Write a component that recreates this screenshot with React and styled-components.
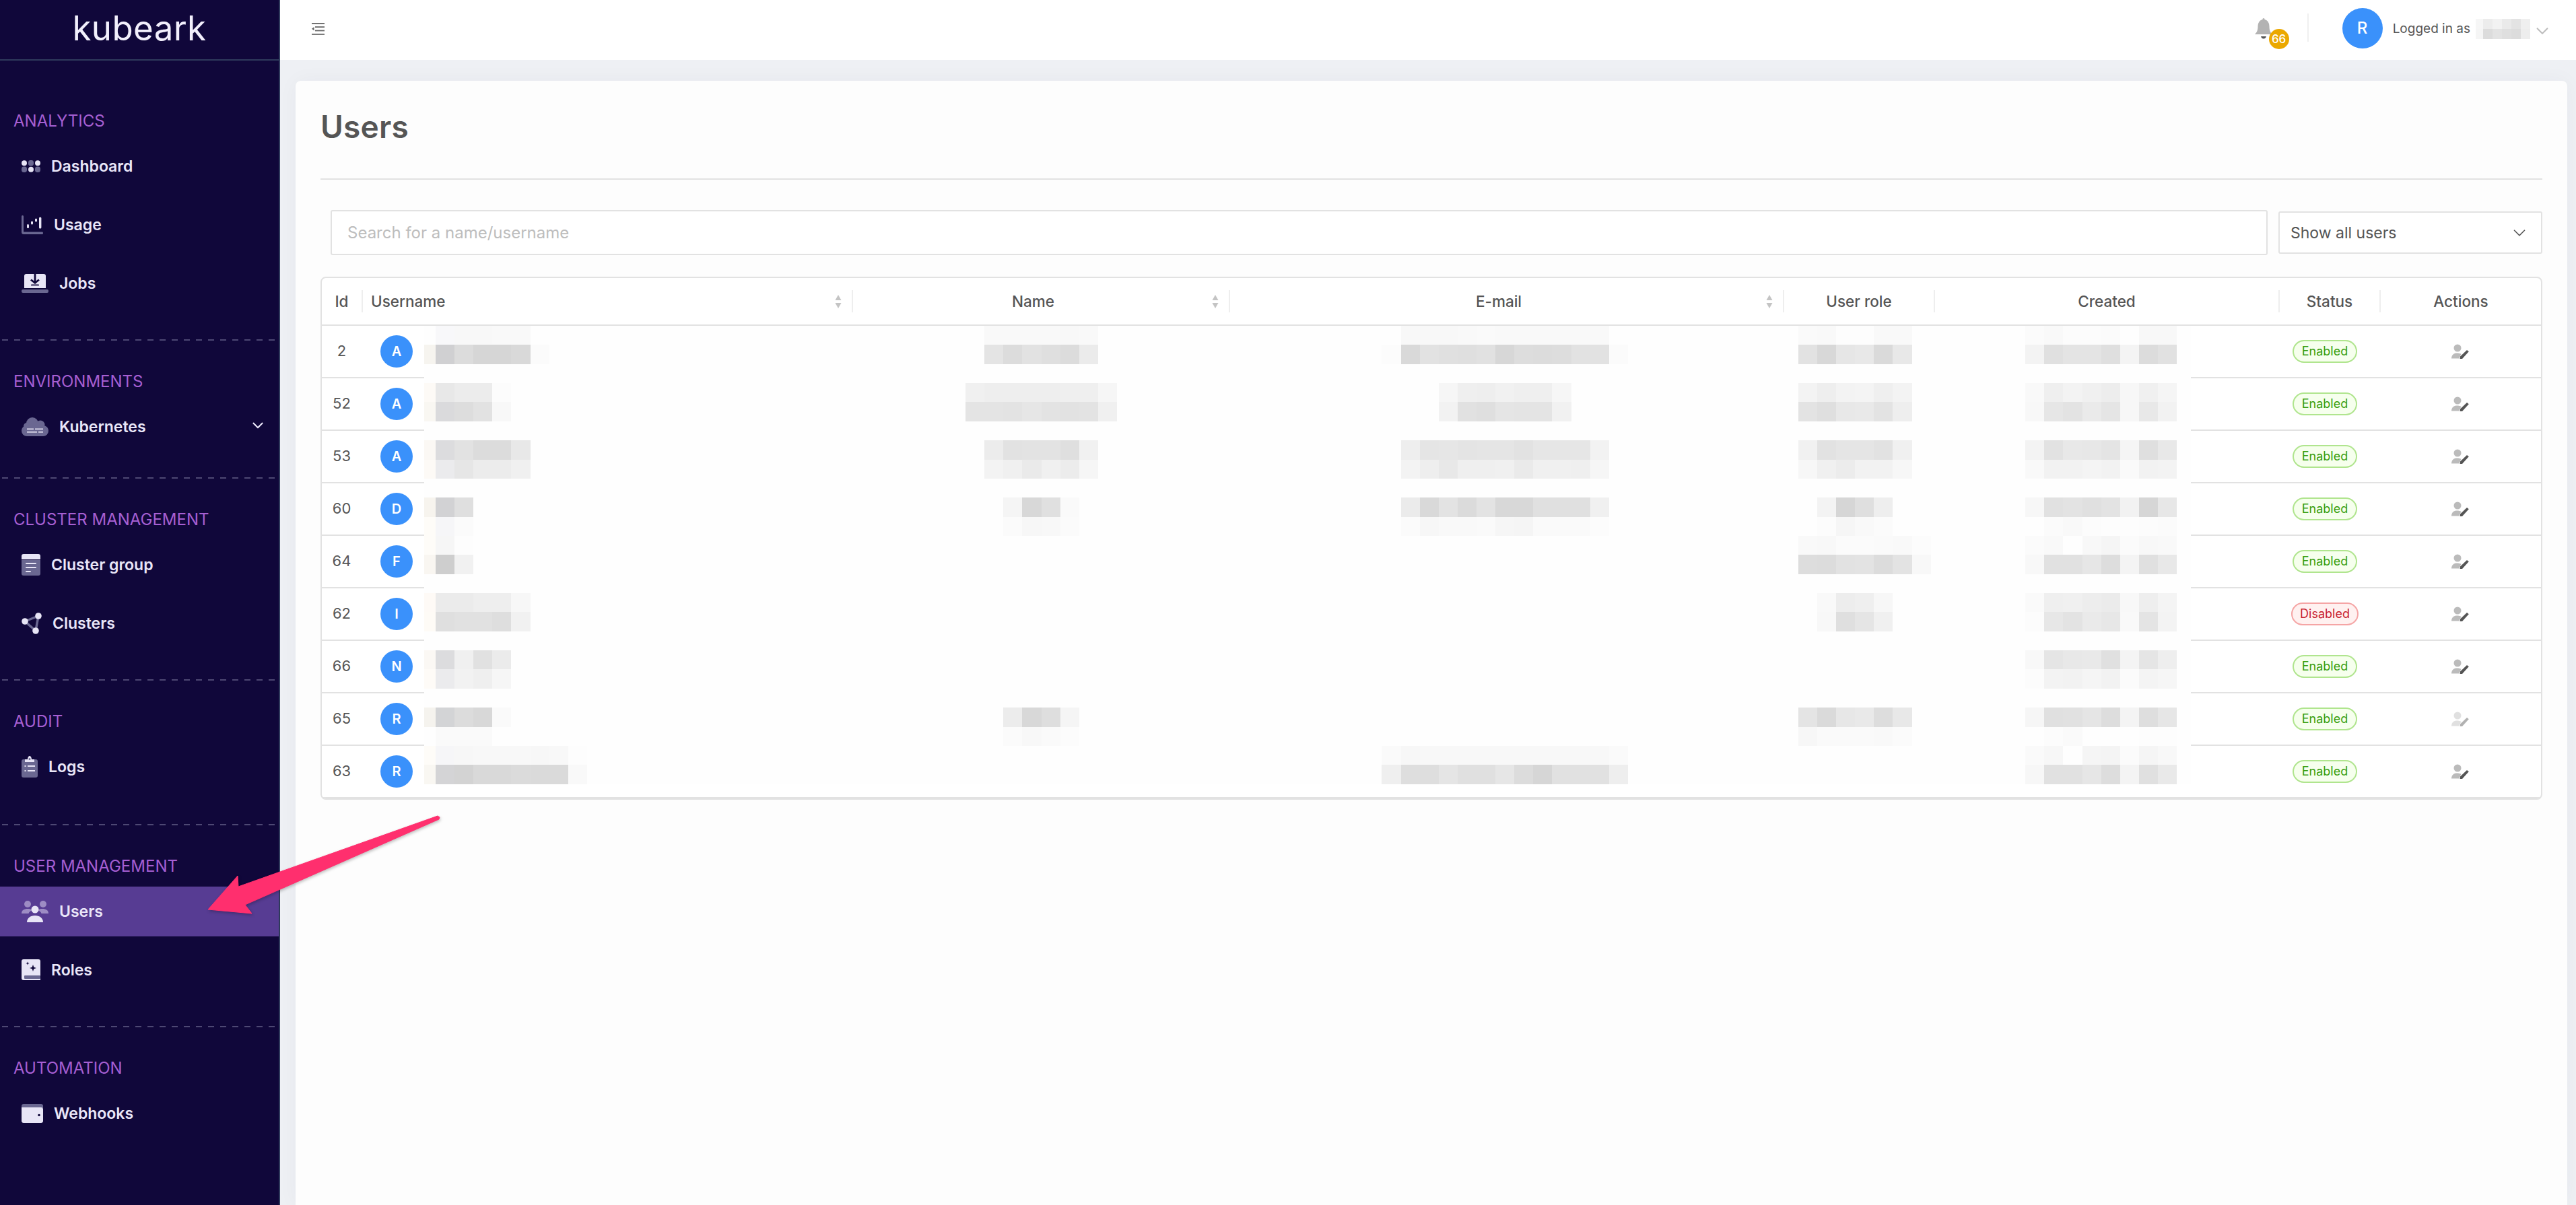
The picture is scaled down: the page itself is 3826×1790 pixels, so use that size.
import React from 'react';
import styled, { createGlobalStyle } from 'styled-components';
import { ChevronDown } from 'lucide-react';

const sans = '"Inter", "Liberation Sans", sans-serif';

const GlobalStyle = createGlobalStyle`
  html, body { margin: 0; padding: 0; background: #eef0f4; }
  body { font-family: ${sans}; overflow: hidden; }
  * { box-sizing: border-box; }
`;

const Root = styled.div`
  position: relative;
  display: flex;
  width: 3826px;
  height: 1790px;
  overflow: hidden;
`;

/* ---------- sidebar ---------- */

const Sidebar = styled.aside`
  flex: 0 0 416px;
  background: #10073a;
  border-right: 2px solid #2f3a5c;
`;

const Logo = styled.div`
  height: 90px;
  padding-bottom: 5px;
  border-bottom: 2px solid #2f3a5c;
  display: flex;
  align-items: center;
  justify-content: center;
  color: #f2effc;
  font-size: 51px;
  letter-spacing: 0.4px;
`;

const Section = styled.section`
  padding: ${p => p.$top}px 0 ${p => p.$bottom}px;
`;

const SectionLabel = styled.div`
  height: 36px;
  line-height: 36px;
  padding-left: 20px;
  margin-bottom: 12px;
  color: #a65fd3;
  font-size: 24px;
  white-space: nowrap;
`;

const ItemList = styled.div`
  display: flex;
  flex-direction: column;
  gap: 13px;
`;

const Item = styled.div`
  height: 74px;
  padding: 0 18px 0 32px;
  display: flex;
  align-items: center;
  gap: 16px;
  color: #e9e6f8;
  font-size: 23px;
  font-weight: 600;
  background: ${p => (p.$active ? '#573c93' : 'transparent')};
`;

const ItemCaret = styled(ChevronDown)`
  margin-left: auto;
  margin-top: -4px;
`;

const Divider = styled.div`
  height: 2px;
  margin: 0 3px;
  background: repeating-linear-gradient(90deg, #4d4873 0 9px, transparent 9px 18px);
`;

/* nav icons, duotone */
const LIGHT = '#e8e5f6';
const DIM = '#6a6791';
const DARK = '#10073a';

const DashboardIcon = () => (
  <svg width="28" height="18" viewBox="0 0 28 18">
    <circle cx="4" cy="4.3" r="4" fill={LIGHT} />
    <rect x="10" y="0" width="8" height="8.4" rx="3.4" fill={DIM} />
    <circle cx="24" cy="4.3" r="4" fill={LIGHT} />
    <rect x="0" y="9.6" width="8" height="8.4" rx="3.4" fill={DIM} />
    <circle cx="14" cy="13.8" r="4" fill={LIGHT} />
    <rect x="20" y="9.6" width="8" height="8.4" rx="3.4" fill={DIM} />
  </svg>
);

const UsageIcon = () => (
  <svg width="32" height="28" viewBox="0 0 32 28">
    <path d="M0 1.5C0 .6.6 0 1.5 0S3 .6 3 1.5V24.5H30.5c.9 0 1.5.7 1.5 1.7S31.4 28 30.5 28H3C1.2 28 0 26.8 0 25Z" fill={DIM} />
    <rect x="8" y="13" width="3" height="6" rx="1.5" fill={LIGHT} />
    <rect x="14" y="8.5" width="3" height="5" rx="1.5" fill={LIGHT} />
    <rect x="20" y="4.5" width="3" height="5" rx="1.5" fill={LIGHT} />
    <rect x="26" y="2.5" width="3.4" height="17" rx="1.6" fill={LIGHT} />
  </svg>
);

const JobsIcon = () => (
  <svg width="40" height="28" viewBox="0 0 40 28">
    <path d="M7 0H33c2 0 3 1 3 3V21H4V3C4 1 5 0 7 0Z" fill={LIGHT} />
    <rect x="0" y="23" width="40" height="5" rx="2" fill={DIM} />
    <path d="M18.6 0h2.8v10.5l3.6-3 1.8 2L20 15l-7-5.5 1.8-2 3.8 3Z" fill={DARK} />
    <rect x="14" y="15.5" width="12" height="1.8" rx=".9" fill={DARK} />
  </svg>
);

const CloudIcon = () => (
  <svg width="40" height="28" viewBox="0 0 40 28">
    <g fill={DIM}>
      <circle cx="16" cy="9" r="9" />
      <circle cx="28" cy="11" r="6.500" />
      <circle cx="8" cy="13" r="5" />
      <rect x="0" y="12" width="40" height="16" rx="8" />
    </g>
    <rect x="8" y="16.500" width="10" height="1.600" fill={LIGHT} />
    <rect x="20" y="16.500" width="12" height="1.600" fill={LIGHT} />
    <rect x="8" y="21" width="15" height="1.600" fill={LIGHT} />
    <rect x="25" y="21" width="7" height="1.600" fill={LIGHT} />
  </svg>
);

const ClusterGroupIcon = () => (
  <svg width="28" height="32" viewBox="0 0 28 32">
    <path d="M0 9H28V29c0 2-1 3-3 3H3c-2 0-3-1-3-3Z" fill={DIM} />
    <path d="M3 0H25c2 0 3 1 3 3V8H0V3C0 1 1 0 3 0Z" fill={LIGHT} />
    <rect x="6" y="13" width="16" height="2" rx="1" fill={LIGHT} />
    <rect x="6" y="19" width="16" height="2" rx="1" fill={LIGHT} />
    <rect x="6" y="25" width="8" height="2" rx="1" fill={LIGHT} />
  </svg>
);

const ClustersIcon = () => (
  <svg width="30" height="32" viewBox="0 0 30 32">
    <path d="M5 13 25 5 21 27Z" fill="none" stroke={DIM} strokeWidth="3.500" />
    <circle cx="5" cy="13" r="4.800" fill={LIGHT} />
    <circle cx="25" cy="5" r="4.800" fill={LIGHT} />
    <circle cx="21" cy="27" r="4.800" fill={LIGHT} />
  </svg>
);

const LogsIcon = () => (
  <svg width="24" height="32" viewBox="0 0 24 32">
    <rect x="0" y="5" width="24" height="27" rx="3" fill={DIM} />
    <path d="M5 5h4c0-3 1.500-5 3-5s3 2 3 5h4v4H5Z" fill={LIGHT} />
    <circle cx="12" cy="4.500" r="1.500" fill={DIM} />
    <rect x="4.500" y="14" width="2" height="2" fill={LIGHT} />
    <rect x="9" y="14" width="11" height="2" fill={LIGHT} />
    <rect x="4.500" y="21" width="2" height="2" fill={LIGHT} />
    <rect x="9" y="21" width="11" height="2" fill={LIGHT} />
  </svg>
);

const UsersIcon = () => (
  <svg width="40" height="32" viewBox="0 0 40 32">
    <circle cx="9" cy="5" r="5" fill="#9d8cc4" />
    <circle cx="32" cy="5" r="5" fill="#9d8cc4" />
    <path d="M0 19c0-5 4-7 9-7 3 0 5 .6 7 2-3 1-5 3-5.500 5Z" fill="#9d8cc4" />
    <path d="M40 19c0-5-4-7-9-7-3 0-5 .6-7 2 3 1 5 3 5.500 5Z" fill="#9d8cc4" />
    <circle cx="20" cy="13" r="5.500" fill={LIGHT} />
    <path d="M8 32c0-6 5-10 12-10s12 4 12 10Z" fill={LIGHT} />
  </svg>
);

const RolesIcon = () => (
  <svg width="28" height="32" viewBox="0 0 28 32">
    <path d="M3 0H25c2 0 3 1 3 3V31H3c-2 0-3-1-3-3V3C0 1 1 0 3 0Z" fill={LIGHT} />
    <rect x="4" y="24" width="24" height="5" rx="1" fill={DIM} />
    <path d="M17 8l1.300 3.700L22 13l-3.700 1.300L17 18l-1.300-3.700L12 13l3.700-1.300Z" fill={DARK} />
    <path d="M9 3.500l.7 2L11.500 6l-1.800.7L9 8.500l-.7-1.800L6.500 6l1.800-.5Z" fill={DARK} />
  </svg>
);

const WebhooksIcon = () => (
  <svg width="32" height="28" viewBox="0 0 32 28">
    <path d="M3 0H29c2 0 3 1 3 3V6H0V3C0 1 1 0 3 0Z" fill={DIM} />
    <path d="M0 5H29c2 0 3 1 3 3V25c0 2-1 3-3 3H3c-2 0-3-1-3-3Z" fill={LIGHT} />
    <circle cx="26" cy="16.500" r="1.800" fill={DARK} />
  </svg>
);

/* ---------- main ---------- */

const Main = styled.main`
  flex: 1;
  min-width: 0;
  display: flex;
  flex-direction: column;
`;

const Topbar = styled.header`
  flex: 0 0 89px;
  background: #fff;
  display: flex;
  align-items: center;
  padding: 0 35px 0 47px;
`;

const CollapseBtn = styled.div`
  display: flex;
  margin-right: auto;
  margin-top: -4px;
`;

const Bell = styled.div`
  position: relative;
  display: flex;
  width: 26px;
  height: 30px;
  margin: -5px 52px 0 0;
`;

const Badge = styled.span`
  position: absolute;
  left: 21px;
  top: 16px;
  width: 30px;
  height: 30px;
  border-radius: 50%;
  background: #eba800;
  color: #fff;
  font-size: 17px;
  font-weight: 500;
  line-height: 30px;
  text-align: center;
`;

const VLine = styled.div`
  width: 2px;
  height: 42px;
  margin-top: -8px;
  background: #f0f0f0;
`;

const UserAvatar = styled.div`
  width: 60px;
  height: 60px;
  margin: -5px 15px 0 50px;
  border-radius: 50%;
  background: #3a91fb;
  color: #fff;
  font-size: 24px;
  font-weight: 500;
  line-height: 60px;
  text-align: center;
`;

const LoggedIn = styled.div`
  display: flex;
  align-items: center;
  margin-top: -4px;
  color: #555;
  font-size: 19px;
  white-space: nowrap;
`;

const NamePixels = styled.div`
  display: grid;
  grid-template-columns: 11px repeat(5, 14px);
  grid-auto-rows: 15px;
  margin-left: 8px;
`;

const UserCaret = styled(ChevronDown)`
  margin: 2px 0 0 3px;
`;

const Card = styled.div`
  flex: 1;
  margin: 31px 13px 0 23px;
  padding: 0 37px;
  background: #fdfdfd;
  border-radius: 8px 8px 0 0;
  box-shadow: 0 0 30px rgba(40, 50, 80, 0.04);
`;

const Title = styled.h1`
  height: 147px;
  margin: 0;
  padding-top: 37px;
  border-bottom: 2px solid #e2e2e2;
  color: #555;
  font-size: 46px;
  font-weight: 600;
  line-height: 62px;
  letter-spacing: 0.2px;
`;

const Filters = styled.div`
  display: flex;
  align-items: center;
  gap: 16px;
  margin: 45px 0 32px 15px;
`;

const Search = styled.div`
  flex: 1;
  height: 67px;
  padding-left: 23px;
  display: flex;
  align-items: center;
  background: #fff;
  border: 2px solid #e2e2e2;
  border-radius: 3px;
  color: #bdbdbd;
  font-size: 24px;
`;

const Select = styled.div`
  flex: 0 0 392px;
  height: 63px;
  padding: 0 17px 0 16px;
  display: flex;
  align-items: center;
  justify-content: space-between;
  background: #fff;
  border: 2px solid #e2e2e2;
  border-radius: 3px;
  color: #555;
  font-size: 23px;
`;

const Table = styled.div`
  position: relative;
  background: #fff;
  border: 2px solid #e2e2e2;
  border-radius: 8px;
  overflow: hidden;
`;

const columns = '59px 728px 560px 823px 224px 512px 150px 1fr';

const HeadRow = styled.div`
  display: grid;
  grid-template-columns: ${columns};
  align-items: center;
  height: 71px;
  border-bottom: 2px solid #e2e2e2;
`;

const HeadCell = styled.div`
  height: 33px;
  padding: ${p => (p.$sort ? '0 15px 0 12px' : '0 12px')};
  display: flex;
  align-items: center;
  justify-content: ${p => (p.$left ? 'space-between' : 'center')};
  border-left: ${p => (p.$first ? 'none' : '2px solid #eeeeee')};
  color: #555;
  font-size: 22.5px;
  font-weight: 500;
`;

const HeadLabel = styled.span`
  flex: ${p => (p.$fill ? 1 : '0 0 auto')};
  padding-right: ${p => (p.$fill ? 10 : 0)}px;
  text-align: ${p => (p.$fill ? 'center' : 'left')};
`;

const Row = styled.div`
  display: grid;
  grid-template-columns: ${columns};
  align-items: center;
  height: 78px;
  border-bottom: 2px solid #e2e2e2;
  &:last-child {
    height: 76px;
    border-bottom: none;
  }
`;

const IdCell = styled.div`
  margin-top: -2px;
  color: #555;
  font-size: 22px;
  text-align: center;
`;

const UserCell = styled.div`
  padding-left: 28px;
`;

const Initial = styled.div`
  width: 48px;
  height: 48px;
  border-radius: 50%;
  background: #3a91fb;
  color: #fff;
  font-size: 20px;
  font-weight: 600;
  line-height: 48px;
  text-align: center;
`;

const StatusCell = styled.div`
  display: flex;
  justify-content: center;
  padding-right: 12px;
`;

const Status = styled.span`
  height: 34px;
  padding: 0 ${p => (p.$off ? 11 : 12)}px;
  border-radius: 17px;
  border: 2px solid ${p => (p.$off ? '#f5a5a5' : '#b0e58e')};
  background: ${p => (p.$off ? '#fff1f0' : '#f6ffed')};
  color: ${p => (p.$off ? '#c8202f' : '#389e0d')};
  font-size: 18px;
  line-height: 30px;
`;

const ActionCell = styled.div`
  display: flex;
  justify-content: center;
  opacity: ${p => (p.$faded ? 0.45 : 1)};
`;

/* censored block over the middle of the table */
const Blur = styled.div`
  position: absolute;
  left: 152px;
  top: 71px;
  width: 2624px;
  height: 681px;
  background: #fefefe;
  display: grid;
  grid-template-columns: 17px repeat(93, 28.12px);
  grid-template-rows: repeat(24, 28.37px);
  overflow: hidden;
`;

const Pixel = styled.i`
  display: block;
`;

const Arrow = styled.svg`
  position: absolute;
  left: 0;
  top: 0;
  pointer-events: none;
  filter: drop-shadow(1px 2px 2px rgba(0, 0, 0, 0.25));
`;

/* ---------- icons ---------- */

const SortIcon = () => (
  <svg width="10" height="20" viewBox="0 0 10 20">
    <path d="M5 0 9.500 8H.5Z" fill="#c4c4c4" />
    <path d="M5 20 9.500 12H.5Z" fill="#c4c4c4" />
  </svg>
);

const EditUserIcon = () => (
  <svg width="26" height="22" viewBox="0 0 26 22">
    <circle cx="9" cy="6" r="5.500" fill="#bbb" />
    <path d="M0 21.500C0 16 4 13.500 8 13.500c3 0 5 .5 6.500 1.500L11 21.500Z" fill="#bbb" />
    <path d="M23 9l2.800 2.200L16 22h-3.500l.5-3.500Z" fill="#555" />
  </svg>
);

const CollapseIcon = () => (
  <svg width="19" height="18" viewBox="0 0 19 18">
    <rect x="0" y="0" width="19" height="1.800" fill="#666" />
    <rect x="5" y="5.200" width="14" height="1.800" fill="#666" />
    <rect x="5" y="10.600" width="14" height="1.800" fill="#666" />
    <rect x="0" y="16" width="19" height="1.800" fill="#666" />
    <path d="M0 8.800 3.500 6v5.600Z" fill="#666" />
  </svg>
);

const BellIcon = () => (
  <svg width="26" height="32" viewBox="0 0 26 32">
    <path d="M13 0c1 0 1.600.8 1.600 2C19 3 21.500 7 21.500 12c0 6 1.500 9 4.500 12H0c3-3 4.500-6 4.500-12C4.500 7 7 3 11.400 2 11.400.8 12 0 13 0Z" fill="#b3b3b3" />
    <path d="M9 27h8c-.5 2-2 3.500-4 3.500S9.500 29 9 27Z" fill="#555" />
  </svg>
);

/* ---------- data ---------- */

const nav = [
  { label: 'ANALYTICS', top: 72, bottom: 46, items: [
    { name: 'Dashboard', icon: <DashboardIcon /> },
    { name: 'Usage', icon: <UsageIcon /> },
    { name: 'Jobs', icon: <JobsIcon /> },
  ] },
  { label: 'ENVIRONMENTS', top: 43, bottom: 38, items: [
    { name: 'Kubernetes', icon: <CloudIcon />, caret: true },
  ] },
  { label: 'CLUSTER MANAGEMENT', top: 43, bottom: 46, items: [
    { name: 'Cluster group', icon: <ClusterGroupIcon /> },
    { name: 'Clusters', icon: <ClustersIcon /> },
  ] },
  { label: 'AUDIT', top: 43, bottom: 48, items: [
    { name: 'Logs', icon: <LogsIcon /> },
  ] },
  { label: 'USER MANAGEMENT', top: 43, bottom: 46, items: [
    { name: 'Users', icon: <UsersIcon />, active: true },
    { name: 'Roles', icon: <RolesIcon /> },
  ] },
  { label: 'AUTOMATION', top: 43, bottom: 0, items: [
    { name: 'Webhooks', icon: <WebhooksIcon /> },
  ] },
];

const users = [
  { id: 2, initial: 'A' },
  { id: 52, initial: 'A' },
  { id: 53, initial: 'A' },
  { id: 60, initial: 'D' },
  { id: 64, initial: 'F' },
  { id: 62, initial: 'I', off: true },
  { id: 66, initial: 'N' },
  { id: 65, initial: 'R', faded: true },
  { id: 63, initial: 'R' },
];

// [band, first column, shades] - two digits is a grey, six a full colour
const blurRuns = [
  // username
  [0, 1, 'f8f8fa f8 f8 f9 f9'],
  [1, 0, 'f6f4ef d0d0d2 dc d6 d6 d9 fb'],
  [3, 0, 'fdfaf6 e8 ec ec fc'],
  [4, 0, 'f9f7f2 dadadc dd e2 f8'],
  [6, 0, 'fbf8f4 dcdcde e2 dc dc e8'],
  [7, 0, 'fdfaf6 ebebed e6 ec ec f0'],
  [9, 0, 'f7f4ee d2d2d4 df'],
  [10, 0, 'fefcf8 f6f6f8 fb'],
  [11, 0, 'fefcf8 f6 fd'],
  [12, 0, 'f9f6f1 ce f1'],
  [14, 0, 'fefaf6 eb eb ee ee f7'],
  [15, 0, 'fefbf6 df e1 e1 de f1'],
  [17, 0, 'fbf8f4 dcdcde f0 e1 eb'],
  [18, 0, 'fefbf7 ebebed f2 ef f6'],
  [20, 0, 'f5f3ee d3d4d6 dc d8 fa'],
  [21, 1, 'fa fa fa'],
  [22, 0, 'fefcf8 f6f6f8 f7 f8 f8 f8 f7 f8 fd'],
  [23, 0, 'f9f7f2 d4d4d6 d3 d9 d9 db da da f9'],
  // name
  [0, 30, 'f9 f9 f9 f9 f8 f9'],
  [1, 30, 'e4 dc e2 df dc eb'],
  [3, 29, 'f0 ee ee ee ee ef ef f6'],
  [4, 29, 'e4 e4 e3 e6 e3 e2 e3 f0'],
  [6, 30, 'ec e2 e3 e3 df f1'],
  [7, 30, 'f3 f0 ea f0 ec f6'],
  [9, 31, 'f5 d8 e0 fa'],
  [10, 31, 'fb f7 f8 fb'],
  [20, 31, 'ec d8 de f5'],
  [21, 31, 'fb f8 fa fc'],
  // e-mail
  [0, 52, 'f8 f8 f8 f9 fa f9 f9 f9 f9 f9 f9'],
  [1, 51, 'fc d9 e2 e0 df e1 d7 dd dc dd e2 e2 fb'],
  [3, 54, 'f6 ef ee f1 ef ef f6'],
  [4, 54, 'f2 e1 df e5 e4 e4 f1'],
  [6, 52, 'ee e5 e6 e4 e5 e5 e2 e6 e6 e6 f2'],
  [7, 52, 'f3 ee e8 ef ef f0 ea f0 f0 ef f6'],
  [9, 52, 'eb d9 e3 db e3 d8 d8 e0 e0 e0 f0'],
  [10, 52, 'fb f7 f9 f9 fa f6 f5 fa fa fa fc'],
  [22, 51, 'fa f7 f8 f8 f8 f8 f8 f8 f8 f8 f8 f8 fa'],
  [23, 51, 'ef de de e5 e0 e0 e6 dc d6 e1 e1 e1 ee'],
  // role
  [0, 73, 'fa f9 fd fd f9 f9'],
  [1, 73, 'e2 d8 e6 e8 da e8'],
  [3, 73, 'f3 ee f3 f4 ef f3'],
  [4, 73, 'e3 df e8 e9 e3 ee'],
  [6, 73, 'f1 e2 e5 e5 e2 f0'],
  [7, 73, 'f7 f0 ec f2 f2 f7'],
  [9, 74, 'f3 d6 df ee'],
  [10, 74, 'fc f6 f9 fb'],
  [11, 73, 'f9 f8 fb fb fa f9 fc'],
  [12, 73, 'dd dc e2 e3 dc e3 f8'],
  [14, 74, 'f9 ed ef f7'],
  [15, 74, 'f8 df e5 f0'],
  [20, 73, 'e4 da e7 e9 dd e8'],
  [21, 73, 'f7 fa fa fa f9 fb'],
  // created
  [0, 85, 'fb f9 fc fc fb fe f8 f8'],
  [1, 85, 'f3 e0 e4 e4 df f4 dc e1'],
  [3, 85, 'f9 ef f3 f0 ed f7 f0 f5'],
  [4, 85, 'f8 e6 e3 ea e5 f7 e8 f2'],
  [6, 85, 'f3 e2 e8 e7 e4 f5 df e8'],
  [7, 85, 'f9 f2 f2 f4 f2 fa f2 f3'],
  [9, 85, 'f7 e1 e3 e0 e3 f2 d6 e7'],
  [10, 85, 'fe fb f9 fc fd fd fc fb'],
  [11, 85, 'fb f9 fe f8 f5 fb f8 f9'],
  [12, 85, 'f8 e1 e1 e6 dd f4 e0 e8'],
  [14, 85, 'fa ef f0 ed eb f8 ee f4'],
  [15, 85, 'fc e7 e3 ea e7 f9 e4 f3'],
  [17, 85, 'f8 e5 e8 e9 e0 f4 e5 ee'],
  [18, 85, 'fc f3 f2 f5 f2 fb f4 f6'],
  [20, 85, 'f6 e0 e1 e5 dd f4 de e6'],
  [21, 85, 'fe fc fa fe fe fe fd fd'],
  [22, 85, 'fa f7 fe f5 f4 fb f5 f8'],
  [23, 85, 'f7 e1 e1 e6 dd f4 e0 e9'],
];

const shade = s => (s.length === 2 ? `#${s}${s}${s}` : `#${s}`);

const blurCells = blurRuns.flatMap(([band, col, shades]) =>
  shades.split(' ').map((s, i) => ({ band, col: col + i, color: shade(s) }))
);

const namePixels = 'f6 ec f2 ea e3 ef f5 dc e3 df dc ed'.split(' ').map(shade);

export default function App() {
  return (
    <Root>
      <GlobalStyle />
      <Sidebar>
        <Logo>kubeark</Logo>
        {nav.map((sec, i) => (
          <React.Fragment key={sec.label}>
            <Section $top={sec.top} $bottom={sec.bottom}>
              <SectionLabel>{sec.label}</SectionLabel>
              <ItemList>
                {sec.items.map(it => (
                  <Item key={it.name} $active={it.active}>
                    {it.icon}
                    {it.name}
                    {it.caret && <ItemCaret size={26} color="#e9e6f8" strokeWidth={2} />}
                  </Item>
                ))}
              </ItemList>
            </Section>
            {i < nav.length - 1 && <Divider />}
          </React.Fragment>
        ))}
      </Sidebar>

      <Main>
        <Topbar>
          <CollapseBtn><CollapseIcon /></CollapseBtn>
          <Bell>
            <BellIcon />
            <Badge>66</Badge>
          </Bell>
          <VLine />
          <UserAvatar>R</UserAvatar>
          <LoggedIn>
            Logged in as
            <NamePixels>
              {namePixels.map((c, i) => <Pixel key={i} style={{ background: c }} />)}
            </NamePixels>
          </LoggedIn>
          <UserCaret size={30} color="#bbb" strokeWidth={1.5} />
        </Topbar>

        <Card>
          <Title>Users</Title>
          <Filters>
            <Search>Search for a name/username</Search>
            <Select>
              Show all users
              <ChevronDown size={30} color="#555" strokeWidth={1.4} />
            </Select>
          </Filters>

          <Table>
            <HeadRow>
              <HeadCell $first>Id</HeadCell>
              <HeadCell $left $sort>
                <HeadLabel>Username</HeadLabel>
                <SortIcon />
              </HeadCell>
              <HeadCell $left $sort>
                <HeadLabel $fill>Name</HeadLabel>
                <SortIcon />
              </HeadCell>
              <HeadCell $left $sort>
                <HeadLabel $fill>E-mail</HeadLabel>
                <SortIcon />
              </HeadCell>
              <HeadCell>User role</HeadCell>
              <HeadCell>Created</HeadCell>
              <HeadCell>Status</HeadCell>
              <HeadCell>Actions</HeadCell>
            </HeadRow>
            {users.map(u => (
              <Row key={u.id}>
                <IdCell>{u.id}</IdCell>
                <UserCell><Initial>{u.initial}</Initial></UserCell>
                <div />
                <div />
                <div />
                <div />
                <StatusCell>
                  <Status $off={u.off}>{u.off ? 'Disabled' : 'Enabled'}</Status>
                </StatusCell>
                <ActionCell $faded={u.faded}><EditUserIcon /></ActionCell>
              </Row>
            ))}
            <Blur>
              {blurCells.map(c => (
                <Pixel
                  key={`${c.band}-${c.col}`}
                  style={{ gridColumn: c.col + 1, gridRow: c.band + 1, background: c.color }}
                />
              ))}
            </Blur>
          </Table>
        </Card>
      </Main>

      <Arrow width="3826" height="1790" viewBox="0 0 3826 1790">
        <path
          d="M650 1212 653 1214 652 1217 364 1344 374 1357 309 1351 353 1301 354 1317Z"
          fill="#ff2f6e"
          stroke="#ff2f6e"
          strokeLinejoin="round"
        />
      </Arrow>
    </Root>
  );
}
